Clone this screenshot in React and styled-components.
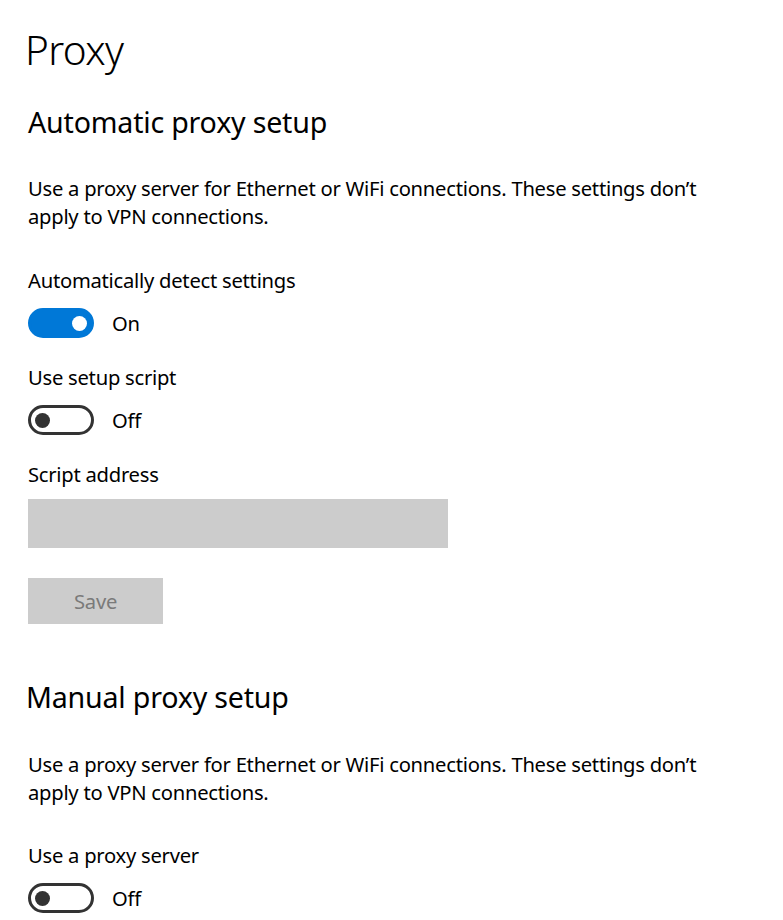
import React from "react";
import styled, { createGlobalStyle } from "styled-components";

const Global = createGlobalStyle`
  html, body { margin: 0; padding: 0; background: #ffffff; }
  body { font-family: "Noto Sans", "Open Sans", sans-serif; color: #000; }
`;

const Page = styled.div`
  width: 783px;
  height: 920px;
  overflow: hidden;
  box-sizing: border-box;
  padding: 22px 0 0 28px;
  display: flex;
  flex-direction: column;
`;

const Title = styled.h1`
  margin: 0 0 0 -3px;
  font-size: 40.5px;
  font-weight: 300;
  line-height: 56px;
  letter-spacing: -0.6px;
`;

const Section = styled.section`
  display: flex;
  flex-direction: column;
  margin-top: ${(p) => p.$top}px;
`;

const Heading = styled.h2`
  margin: 0 0 0 ${(p) => p.$indent || 0}px;
  font-size: 28.6px;
  font-weight: 400;
  line-height: 40px;
  letter-spacing: -0.2px;
`;

const Desc = styled.p`
  margin: ${(p) => p.$top}px 0 0;
  width: 700px;
  font-size: 20.2px;
  line-height: 28px;
  letter-spacing: -0.25px;
`;

const Label = styled.div`
  margin-top: ${(p) => p.$top}px;
  font-size: 20.2px;
  line-height: 28px;
  letter-spacing: -0.25px;
`;

const ToggleRow = styled.div`
  display: flex;
  align-items: center;
  gap: 18px;
  margin-top: 14px;
  height: 30px;
`;

const Track = styled.div`
  box-sizing: border-box;
  width: 66px;
  height: 30px;
  border-radius: 15px;
  border: 3px solid ${(p) => (p.$on ? "#0078d7" : "#333333")};
  background: ${(p) => (p.$on ? "#0078d7" : "#ffffff")};
  display: flex;
  align-items: center;
  justify-content: ${(p) => (p.$on ? "flex-end" : "flex-start")};
  padding: 0 4px;
`;

const Thumb = styled.div`
  width: 15px;
  height: 15px;
  border-radius: 50%;
  background: ${(p) => (p.$on ? "#ffffff" : "#333333")};
`;

const State = styled.span`
  font-size: 20.2px;
  line-height: 28px;
  letter-spacing: -0.25px;
`;

const Input = styled.div`
  margin-top: 11px;
  width: 420px;
  height: 49px;
  background: #cccccc;
`;

const Button = styled.div`
  margin-top: 30px;
  width: 135px;
  height: 46px;
  background: #cccccc;
  color: #7a7a7a;
  display: flex;
  align-items: center;
  justify-content: center;
  font-size: 20.2px;
  letter-spacing: -0.25px;
`;

function Toggle({ on }) {
  return (
    <ToggleRow>
      <Track $on={on}>
        <Thumb $on={on} />
      </Track>
      <State>{on ? "On" : "Off"}</State>
    </ToggleRow>
  );
}

const DESC =
  "Use a proxy server for Ethernet or WiFi connections. These settings don\u2019t apply to VPN connections.";

export default function App() {
  return (
    <>
      <Global />
      <Page>
        <Title>Proxy</Title>
        <Section $top={24}>
          <Heading>Automatic proxy setup</Heading>
          <Desc $top={32}>{DESC}</Desc>
          <Label $top={36}>Automatically detect settings</Label>
          <Toggle on />
          <Label $top={25}>Use setup script</Label>
          <Toggle on={false} />
          <Label $top={25}>Script address</Label>
          <Input />
          <Button>Save</Button>
        </Section>
        <Section $top={53}>
          <Heading $indent={-2}>Manual proxy setup</Heading>
          <Desc $top={33}>{DESC}</Desc>
          <Label $top={35}>Use a proxy server</Label>
          <Toggle on={false} />
        </Section>
      </Page>
    </>
  );
}
